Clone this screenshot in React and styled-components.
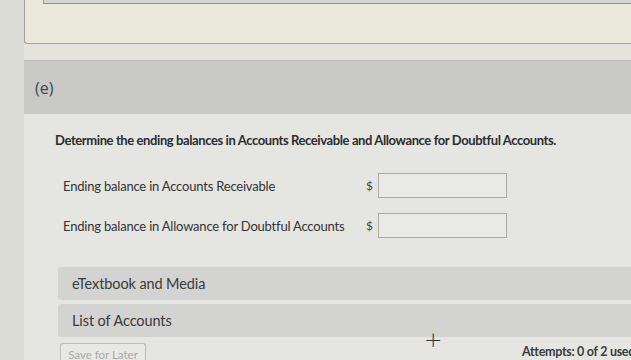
import React from "react";
import styled, { createGlobalStyle } from "styled-components";

const GlobalStyle = createGlobalStyle`
  html, body {
    margin: 0;
    padding: 0;
    width: 631px;
    height: 360px;
    overflow: hidden;
    background: #e2e2db;
    font-family: Lato, "Open Sans", sans-serif;
    color: #2f2f2f;
  }
`;

const Page = styled.div`
  position: relative;
  display: flex;
  width: 631px;
  height: 360px;
  overflow: hidden;
`;

const Gutter = styled.div`
  flex: 0 0 24px;
  background: #dcdcd6;
`;

const Main = styled.div`
  flex: 1;
  display: flex;
  flex-direction: column;
  background: #e4e4dc;
`;

const TopCard = styled.div`
  flex: 0 0 auto;
  height: 44px;
  margin-top: -2px;
  padding-left: 18px;
  background: #eae9dc;
  border: 1px solid #a4a49e;
  border-right: none;
  border-radius: 0 0 0 3px;
`;

const InnerStrip = styled.div`
  height: 4px;
  background: #d6d6d0;
  border-bottom: 1px solid #8f8f8a;
  border-left: 1px solid #9a9a94;
`;

const SectionHeader = styled.div`
  flex: 0 0 auto;
  margin-top: 16px;
  height: 53px;
  display: flex;
  align-items: center;
  padding-left: 11px;
  background: #c9c9c5;
  border-top: 1px solid #bdbdb9;
  font-family: "Open Sans", sans-serif;
  font-size: 16px;
  color: #3d4650;
`;

const Content = styled.div`
  flex: 1 0 auto;
  padding: 18px 0 0 31px;
  background: #e5e6e2;
`;

const Prompt = styled.p`
  margin: 0;
  font-size: 13px;
  line-height: 16px;
  font-weight: 700;
  letter-spacing: -0.4px;
  color: #2c2c2c;
`;

const Fields = styled.div`
  display: flex;
  flex-direction: column;
  gap: 15px;
  margin: 25px 0 0 8px;
`;

const Row = styled.div`
  display: grid;
  grid-template-columns: 303px 12px 129px;
  align-items: center;
`;

const Label = styled.span`
  font-size: 13px;
  letter-spacing: -0.2px;
  color: #333;
`;

const Dollar = styled.span`
  font-size: 12px;
  color: #444;
`;

const Input = styled.div`
  height: 23px;
  background: #e9e9e6;
  border: 1px solid #aaaaa6;
`;

const Bars = styled.div`
  display: flex;
  flex-direction: column;
  gap: 4px;
  margin: 29px 0 0 3px;
`;

const Bar = styled.div`
  height: 33px;
  display: flex;
  align-items: center;
  padding-left: 14px;
  background: #d3d3d1;
  border-radius: 3px 0 0 3px;
  font-size: 14.5px;
  letter-spacing: -0.1px;
  color: #3a3a3a;
`;

const Footer = styled.div`
  display: flex;
  align-items: flex-start;
  margin: 6px 0 0 5px;
  height: 24px;
  white-space: nowrap;
`;

const SaveButton = styled.div`
  width: 84px;
  height: 20px;
  padding-top: 4px;
  border: 1px solid #bcbcb8;
  border-bottom: none;
  border-radius: 3px 3px 0 0;
  background: #e8e9e6;
  text-align: center;
  font-size: 11.5px;
  color: #a8a8a8;
`;

const Attempts = styled.span`
  margin: 1px 0 0 376px;
  font-size: 12.5px;
  font-weight: 700;
  letter-spacing: -0.3px;
  color: #3a3a3a;
`;

const Cursor = styled.span`
  position: absolute;
  left: 424px;
  top: 327px;
  font-family: "DejaVu Sans", sans-serif;
  font-size: 22px;
  font-weight: 300;
  color: #333;
`;

export default function App() {
  return (
    <>
      <GlobalStyle />
      <Page>
        <Gutter />
        <Main>
          <TopCard>
            <InnerStrip />
          </TopCard>
          <SectionHeader>(e)</SectionHeader>
          <Content>
            <Prompt>
              Determine the ending balances in Accounts Receivable and Allowance for Doubtful Accounts.
            </Prompt>
            <Fields>
              <Row>
                <Label>Ending balance in Accounts Receivable</Label>
                <Dollar>$</Dollar>
                <Input />
              </Row>
              <Row>
                <Label>Ending balance in Allowance for Doubtful Accounts</Label>
                <Dollar>$</Dollar>
                <Input />
              </Row>
            </Fields>
            <Bars>
              <Bar>eTextbook and Media</Bar>
              <Bar>List of Accounts</Bar>
            </Bars>
            <Footer>
              <SaveButton>Save for Later</SaveButton>
              <Attempts>Attempts: 0 of 2 used</Attempts>
            </Footer>
          </Content>
        </Main>
        <Cursor>+</Cursor>
      </Page>
    </>
  );
}
